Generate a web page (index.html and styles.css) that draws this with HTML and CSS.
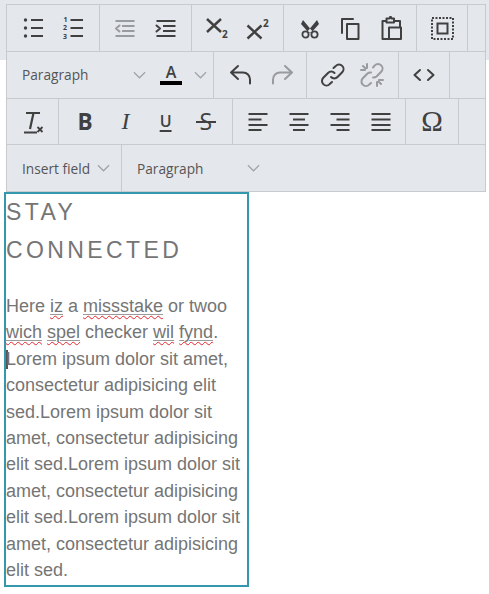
FILE: index.html
```html
<!DOCTYPE html>
<html lang="en">
<head>
<meta charset="utf-8">
<title>Editor</title>
<link rel="stylesheet" href="styles.css">
</head>
<body>
<div class="toolbar">
  <div class="row">
    <div class="group w93 p7">
      <span class="btn"><svg class="ic" viewBox="0 0 24 24"><path d="M9 4h12M9 12h12M9 20h12" class="s"/><circle cx="3.500" cy="4" r="1.700" class="f"/><circle cx="3.500" cy="12" r="1.700" class="f"/><circle cx="3.500" cy="20" r="1.700" class="f"/></svg></span>
      <span class="btn"><svg class="ic" viewBox="0 0 24 24"><path d="M9.500 4h12.500M9.500 12h12.500M9.500 20h12.500" class="s"/><text x="2.500" y="6" class="num">1</text><text x="2" y="14" class="num">2</text><text x="2" y="22.500" class="num">3</text></svg></span>
    </div>
    <div class="group w92 p5">
      <span class="btn off"><svg class="ic" viewBox="0 0 24 24"><path d="M2.500 5h19M9 10h12.500M9 15h12.500M2.500 20h19" class="s"/><path d="M6.500 9.500L3 12.500l3.500 3" class="s2"/></svg></span>
      <span class="btn"><svg class="ic" viewBox="0 0 24 24"><path d="M2.500 5h19M9 10h12.500M9 15h12.500M2.500 20h19" class="s"/><path d="M2.500 9.500l3.500 3-3.500 3" class="s2"/></svg></span>
    </div>
    <div class="group w92 p7">
      <span class="btn"><svg class="ic" viewBox="0 0 24 24"><path d="M1 3l14 13M15 3L1 16" class="sx"/><text x="16" y="21.500" class="sub">2</text></svg></span>
      <span class="btn"><svg class="ic" viewBox="0 0 24 24"><path d="M2.500 9.500l14 13M16.500 9.500l-14 13" class="sx"/><text x="18" y="11" class="sub">2</text></svg></span>
    </div>
    <div class="group w133 p7">
      <span class="btn"><svg class="ic" viewBox="0 0 24 24"><circle cx="6.500" cy="18.500" r="3.100" class="s1"/><circle cx="15.500" cy="18.500" r="3.100" class="s1"/><path d="M8 16L18 4l2 4-8 9zM14 16L4 4 2 8l8 9z" class="f"/></svg></span>
      <span class="btn"><svg class="ic" viewBox="0 0 24 24"><path d="M9 8h11.500v15H9zM4 17V3h11" class="s2"/></svg></span>
      <span class="btn"><svg class="ic" viewBox="0 0 24 24"><path d="M11 23H5.500V5H9M17 5h6v5.500M9.500 6.500V2.500h3l.5-1.500h1l.5 1.500h2.500v4zM12 11.500h12V23H12z" class="s2"/></svg></span>
    </div>
    <div class="group w51">
      <span class="btn"><svg class="ic" viewBox="0 0 24 24"><path d="M7.500 7.500h10v10h-10z" class="sq"/><path d="M2 2h21v21H2z" class="dash"/></svg></span>
    </div>
    <div class="group rest"></div>
  </div>
  <div class="row">
    <div class="group w207 start">
      <span class="select para">Paragraph<svg class="chev" viewBox="0 0 14 8"><path d="M1 1l6 6 6-6"/></svg></span>
      <span class="color"><span class="a">A</span><span class="bar"></span></span>
      <svg class="chev chev-c" viewBox="0 0 14 8"><path d="M1 1l6 6 6-6"/></svg>
    </div>
    <div class="group w93 p7">
      <span class="btn"><svg class="ic" viewBox="0 0 24 24"><path d="M9 3L2 9.500 9 16M2 9.500h12c4 0 7 3 7 7v4" class="s2"/></svg></span>
      <span class="btn off"><svg class="ic" viewBox="0 0 24 24"><path d="M17 3l7 6.500-7 6.500M24 9.500H12c-4 0-7 3-7 7v4" class="s2"/></svg></span>
    </div>
    <div class="group w92 p7">
      <span class="btn"><svg class="ic" viewBox="0 0 24 24"><path d="M10 14a4.500 4.500 0 0 0 6.500 0l4.700-4.700a4.500 4.500 0 0 0-6.400-6.400L12.500 5M13.500 10a4.500 4.500 0 0 0-6.500 0l-4.700 4.700a4.500 4.500 0 0 0 6.400 6.400l2.300-2.100" class="s2"/></svg></span>
      <span class="btn off"><svg class="ic" viewBox="0 0 24 24"><path d="M13 14.500a4.500 4.500 0 0 0 3.500-1l4.700-4.700a4.500 4.500 0 0 0-6.400-6.400L13 4.500M11 9.500a4.500 4.500 0 0 0-3.500 1l-4.700 4.700a4.500 4.500 0 0 0 6.400 6.400L11 20M7 1v4M1 7h4M3 3l2.500 2.500M17 23v-4M23 17h-4M21 21l-2.500-2.500" class="s2"/></svg></span>
    </div>
    <div class="group w51">
      <span class="btn"><svg class="ic" viewBox="0 0 24 24"><path d="M8 7l-5.500 5L8 17M16 7l5.500 5-5.500 5" class="s2"/></svg></span>
    </div>
    <div class="group rest"></div>
  </div>
  <div class="row">
    <div class="group w52">
      <span class="btn"><svg class="ic" viewBox="0 0 24 24"><path d="M5 4h14M12.500 4L9 20M3 23.500h13" class="sx2"/><path d="M16.500 18l5 5M21.500 18l-5 5" class="s1"/></svg></span>
    </div>
    <div class="group w174 p6">
      <span class="btn glyph bold">B</span>
      <span class="btn glyph ital">I</span>
      <span class="btn glyph under">U</span>
      <span class="btn glyph"><span class="strike">S</span></span>
    </div>
    <div class="group w173 p4">
      <span class="btn"><svg class="ic" viewBox="0 0 24 24"><path d="M2.500 5h19M2.500 10.500h13M2.500 16h19M2.500 21h13" class="s"/></svg></span>
      <span class="btn"><svg class="ic" viewBox="0 0 24 24"><path d="M2.500 5h19M6 10.500h12M2.500 16h19M6 21h12" class="s"/></svg></span>
      <span class="btn"><svg class="ic" viewBox="0 0 24 24"><path d="M2.500 5h19M8.500 10.500h13M2.500 16h19M8.500 21h13" class="s"/></svg></span>
      <span class="btn"><svg class="ic" viewBox="0 0 24 24"><path d="M2.500 5h19M2.500 10.500h19M2.500 16h19M2.500 21h19" class="s"/></svg></span>
    </div>
    <div class="group w53">
      <span class="btn glyph omega">Ω</span>
    </div>
    <div class="group rest"></div>
  </div>
  <div class="row">
    <div class="group w115 start">
      <span class="select field">Insert field<svg class="chev" viewBox="0 0 14 8"><path d="M1 1l6 6 6-6"/></svg></span>
    </div>
    <div class="group rest start">
      <span class="select para2">Paragraph<svg class="chev" viewBox="0 0 14 8"><path d="M1 1l6 6 6-6"/></svg></span>
    </div>
  </div>
</div>
<div class="editor">
  <h1 class="title">STAY CONNECTED</h1>
  <p class="copy">Here <span class="sp"><span class="wave">iz</span></span> a <span class="sp"><span class="wave">missstake</span></span> or twoo <span class="sp"><span class="wave">wich</span></span> <span class="sp"><span class="wave">spel</span></span> checker <span class="sp"><span class="wave">wil</span></span> <span class="sp"><span class="wave">fynd</span></span>.<br><span class="caret"></span>Lorem ipsum dolor sit amet, consectetur adipisicing elit sed.Lorem ipsum dolor sit amet, consectetur adipisicing elit sed.Lorem ipsum dolor sit amet, consectetur adipisicing elit sed.Lorem ipsum dolor sit amet, consectetur adipisicing elit sed.</p>
</div>
</body>
</html>
```
FILE: styles.css
```css
* { box-sizing: border-box; }
html, body { margin: 0; padding: 0; background-color: #fff; }
body { width: 489px; height: 594px; overflow: hidden; padding: 4px 0 0 4px; background-image: linear-gradient(#e4e7ec, #e4e7ec); background-repeat: no-repeat; background-size: 489px 60px; }
.toolbar { width: 480px; margin-left: 2px; height: 188px; background: #e4e7ec; border: 1px solid #c8cacd; display: flex; flex-direction: column; }
.row { flex: 1 1 0; display: flex; border-bottom: 1px solid #c8cacd; }
.row:last-child { border-bottom: 0; }
.group { display: flex; align-items: center; height: 100%; border-right: 1px solid #c8cacd; flex: none; }
.w51 { width: 51px; }
.w52 { width: 52px; }
.w53 { width: 53px; }
.w92 { width: 92px; }
.w93 { width: 93px; }
.w115 { width: 115px; }
.w133 { width: 133px; }
.w173 { width: 173px; }
.w174 { width: 174px; }
.w207 { width: 207px; }
.p4 { padding: 0 4px; }
.p5 { padding: 0 5px; }
.p6 { padding: 0 6px; }
.p7 { padding: 0 7px; }
.start { justify-content: flex-start; }
.rest { flex: 1; border-right: 0; }
.btn { display: flex; align-items: center; justify-content: center; flex: 1 1 0; height: 100%; color: #404040; }
.off { opacity: .45; }
.ic { width: 24px; height: 24px; overflow: visible; flex: none; }
.s { fill: none; stroke: #404040; stroke-width: 2; }
.s1 { fill: none; stroke: #404040; stroke-width: 1.800; }
.s2 { fill: none; stroke: #404040; stroke-width: 2; stroke-linecap: round; stroke-linejoin: round; }
.sx { fill: none; stroke: #404040; stroke-width: 2.400; }
.sx2 { fill: none; stroke: #404040; stroke-width: 2.200; }
.sq { fill: none; stroke: #404040; stroke-width: 2; }
.f { fill: #404040; }
.num { font: 700 7px "Open Sans", sans-serif; fill: #404040; }
.dash { fill: none; stroke: #404040; stroke-width: 2; stroke-dasharray: 2 1.500; }
.sub { font: 700 10px "Open Sans", sans-serif; fill: #404040; }
.select { display: flex; align-items: center; font: 13.700px "Open Sans", sans-serif; color: #555; }
.para { width: 139px; padding-left: 15px; justify-content: space-between; }
.chev { width: 13px; height: 8px; fill: none; stroke: #a0a3a8; stroke-width: 1.300; flex: none; }
.color { display: flex; flex-direction: column; align-items: center; width: 22px; margin-left: 14px; }
.a { font: 600 16px/16px "Open Sans", sans-serif; color: #404040; }
.bar { width: 22px; height: 4px; background: #000; margin-top: 1px; }
.chev-c { margin-left: 12px; }
.bold { font: 700 22.500px "Open Sans", sans-serif; }
.ital { font: italic 24px "Liberation Serif", serif; }
.under { font: 600 16px "Open Sans", sans-serif; text-decoration: underline 2px; text-underline-offset: 3px; }
.strike { position: relative; font: 400 23px "Open Sans", sans-serif; color: #404040; }
.strike::after { content: ""; position: absolute; left: -4px; right: -4px; top: 50%; height: 2px; background: #404040; }
.omega { font: 29px "Liberation Serif", serif; }
.field { padding-left: 15px; gap: 7px; }
.para2 { padding-left: 15px; gap: 44px; }
.editor { width: 245px; height: 395px; border: 2px solid #3497ae; color: #757575; font-family: "Liberation Sans", Arial, sans-serif; }
.title { margin: -1px 0 0; font-size: 23px; font-weight: 400; line-height: 38px; letter-spacing: 3.400px; }
.copy { margin: 24px 0 0; font-size: 18px; line-height: 26.400px; }
.sp { text-decoration: underline #9a9a9a 1px; text-underline-offset: 2px; }
.wave { text-decoration: underline wavy #e5262d 1px; text-underline-offset: 3px; }
.caret { display: inline-block; width: 2px; height: 19px; background: #555; margin-right: -2px; vertical-align: -4px; }
```
